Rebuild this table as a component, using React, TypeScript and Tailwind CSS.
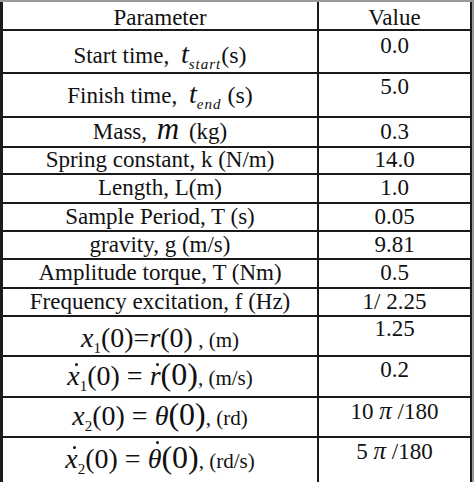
import React from "react";

const serif = { fontFamily: '"Liberation Serif", "Times New Roman", serif' };

// dotted letter (time derivative), dot is drawn over the glyph
function Dotted({ children, pos }: { children: React.ReactNode; pos: string }) {
  return (
    <span className="relative">
      {children}
      <span className={"absolute h-[3px] w-[3px] rounded-full bg-[#111] " + pos} />
    </span>
  );
}

function Big({ children, italic }: { children: React.ReactNode; italic?: boolean }) {
  return (
    <span className={"text-[28px] leading-[0] " + (italic ? "italic" : "")}>{children}</span>
  );
}

function Sub({ children, italic }: { children: React.ReactNode; italic?: boolean }) {
  return (
    <span
      className={
        "relative top-[6px] text-[15px] leading-[0] " + (italic ? "italic tracking-[1px]" : "")
      }
    >
      {children}
    </span>
  );
}

type Row = {
  h: string;
  lp: string;
  rp: string;
  left: React.ReactNode;
  right: React.ReactNode;
  last?: boolean;
};

const rows: Row[] = [
  { h: "h-[29px]", lp: "pt-[4px]", rp: "pt-[4px]", left: "Parameter", right: "Value" },
  {
    h: "h-[43px]",
    lp: "pt-[12px]",
    rp: "pt-[3px]",
    left: (
      <>
        Start time,{" "}
        <span className="ml-[6px] text-[28px] italic leading-[0]">t</span>
        <Sub italic>start</Sub>
        <span className="text-[24px]">(s)</span>
      </>
    ),
    right: "0.0",
  },
  {
    h: "h-[44px]",
    lp: "pt-[9px]",
    rp: "pt-[1px]",
    left: (
      <>
        Finish time,{" "}
        <span className="ml-[6px] text-[28px] italic leading-[0]">t</span>
        <Sub italic>end</Sub>
        <span className="text-[24px]">{"  "}(s)</span>
      </>
    ),
    right: "5.0",
  },
  {
    h: "h-[30px]",
    lp: "pt-[2px]",
    rp: "pt-[2px]",
    left: (
      <>
        Mass,{" "}
        <span className="mx-[4px] text-[31px] italic leading-[0]">m</span> (kg)
      </>
    ),
    right: "0.3",
  },
  { h: "h-[27px]", lp: "pt-0", rp: "pt-0", left: "Spring constant, k (N/m)", right: "14.0" },
  { h: "h-[29px]", lp: "pt-[1px]", rp: "pt-[1px]", left: "Length, L(m)", right: "1.0" },
  { h: "h-[28px]", lp: "pt-[1px]", rp: "pt-[1px]", left: "Sample Period, T (s)", right: "0.05" },
  { h: "h-[28px]", lp: "pt-[1px]", rp: "pt-[1px]", left: "gravity, g (m/s)", right: "9.81" },
  { h: "h-[29px]", lp: "pt-[1px]", rp: "pt-[1px]", left: "Amplitude torque, T (Nm)", right: "0.5" },
  { h: "h-[28px]", lp: "pt-[1px]", rp: "pt-[1px]", left: "Frequency excitation, f (Hz)", right: "1/ 2.25" },
  {
    h: "h-[40px]",
    lp: "pt-[11px]",
    rp: "pt-0",
    left: (
      <>
        <Big italic>x</Big>
        <Sub>1</Sub>
        <Big>(0)=</Big>
        <Big italic>r</Big>
        <Big>(0)</Big>
        <span className="text-[21px]"> , (m)</span>
      </>
    ),
    right: "1.25",
  },
  {
    h: "h-[41px]",
    lp: "pt-[9px]",
    rp: "pt-[1px]",
    left: (
      <>
        <Big italic>
          <Dotted pos="left-[8px] top-[3px]">x</Dotted>
        </Big>
        <Sub>1</Sub>
        <Big>(0) = </Big>
        <Big italic>
          <Dotted pos="left-[6px] top-[3px]">r</Dotted>
        </Big>
        <span className="text-[32px] leading-[0]">(0)</span>
        <span className="text-[21px]">, (m/s)</span>
      </>
    ),
    right: "0.2",
  },
  {
    h: "h-[40px]",
    lp: "pt-[8px]",
    rp: "pt-[2px]",
    left: (
      <>
        <Big italic>x</Big>
        <Sub>2</Sub>
        <Big>(0) = </Big>
        <Big italic>θ</Big>
        <span className="text-[32px] leading-[0]">(0)</span>
        <span className="text-[21px]">, (rd)</span>
      </>
    ),
    right: (
      <>
        10 <span className="text-[25px] italic leading-[0]">π</span> /180
      </>
    ),
  },
  {
    h: "h-[44px]",
    lp: "pt-[11px]",
    rp: "pt-[2px]",
    last: true,
    left: (
      <>
        <Big italic>
          <Dotted pos="left-[8px] top-[3px]">x</Dotted>
        </Big>
        <Sub>2</Sub>
        <Big>(0) = </Big>
        <Big italic>
          <Dotted pos="left-[8px] top-[-2px]">θ</Dotted>
        </Big>
        <span className="text-[32px] leading-[0]">(0)</span>
        <span className="text-[21px]">, (rd/s)</span>
      </>
    ),
    right: (
      <>
        5 <span className="text-[25px] italic leading-[0]">π</span> /180
      </>
    ),
  },
];

export default function App() {
  return (
    <div
      className="h-[482px] w-[474px] overflow-hidden bg-[#9a9a9a] pr-[2px] pt-[2px] text-[23px] leading-none text-[#111]"
      style={serif}
    >
      <div className="h-full border-l-[3px] border-r-2 border-[#1a1a1a] bg-white">
        {rows.map((r, i) => (
          <div
            key={i}
            className={
              "grid grid-cols-[316px_1fr] " + r.h + (r.last ? "" : " border-b-2 border-[#1a1a1a]")
            }
          >
            <div className={"whitespace-nowrap border-r-2 border-[#1a1a1a] text-center " + r.lp}>
              {r.left}
            </div>
            <div className={"whitespace-nowrap text-center " + r.rp}>{r.right}</div>
          </div>
        ))}
      </div>
    </div>
  );
}
